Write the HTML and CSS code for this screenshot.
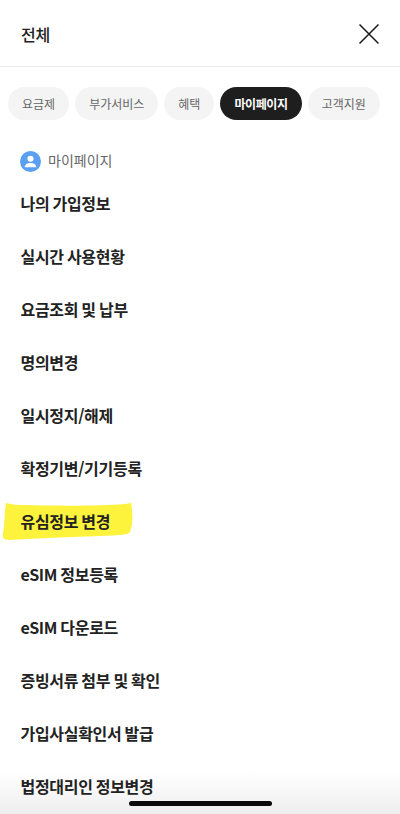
FILE: index.html
```html
<!DOCTYPE html>
<html lang="ko">
<head>
<meta charset="utf-8">
<title>전체</title>
<link rel="stylesheet" href="styles.css">
</head>
<body>
<div class="page">
  <header class="top">
    <h1 class="title">전체</h1>
    <svg class="close" viewBox="0 0 20 20" width="20" height="20"><path d="M.5.5l19 19M19.500.5l-19 19" fill="none" stroke="#1a1a1a" stroke-width="1.500"/></svg>
  </header>
  <nav class="tabs">
    <span class="tab">요금제</span>
    <span class="tab">부가서비스</span>
    <span class="tab">혜택</span>
    <span class="tab active">마이페이지</span>
    <span class="tab">고객지원</span>
  </nav>
  <div class="section">
    <svg class="avatar" viewBox="0 0 20 20" width="21" height="21"><circle cx="10" cy="10" r="10" fill="#5a9ff0"/><circle cx="10" cy="7.400" r="2.900" fill="#fff"/><path d="M4.500 15.500c0-2.600 2.500-4 5.500-4s5.500 1.400 5.500 4z" fill="#fff"/></svg>
    <span class="section-name">마이페이지</span>
  </div>
  <ul class="menu">
    <li>나의 가입정보</li>
    <li>실시간 사용현황</li>
    <li>요금조회 및 납부</li>
    <li>명의변경</li>
    <li>일시정지/해제</li>
    <li>확정기변/기기등록</li>
    <li class="marked"><svg class="marker" viewBox="0 0 132 38" width="132" height="38"><path d="M5 0C9 1 14 2 22 2C60 3 100 3 124 1L130 0C132 10 132 22 129 29C127 32 120 32 100 33C60 34 30 36 8 37C3 37 1 36 2 30C4 22 3 12 5 0z" fill="#fdf23c"/></svg><span class="label">유심정보 변경</span></li>
    <li>eSIM 정보등록</li>
    <li>eSIM 다운로드</li>
    <li>증빙서류 첨부 및 확인</li>
    <li>가입사실확인서 발급</li>
    <li>법정대리인 정보변경</li>
  </ul>
  <div class="fade"></div>
  <div class="home"></div>
</div>
</body>
</html>
```
FILE: styles.css
```css
* { box-sizing: border-box; }
html, body { margin: 0; padding: 0; }
body { background: #fff; font-family: "Noto Sans CJK KR", "Noto Sans", sans-serif; color: #222; }
.page { position: relative; width: 400px; height: 814px; overflow: hidden; }
.top { display: flex; align-items: center; justify-content: space-between; height: 67px; padding: 1px 21px 0 21px; border-bottom: 1px solid #ececec; }
.title { margin: 0; font-size: 16px; font-weight: 500; line-height: 22px; letter-spacing: -.3px; color: #222; }
.close { display: block; }
.tabs { display: flex; gap: 6px; padding: 20px 0 0 8px; }
.tab { display: flex; align-items: center; height: 33px; padding: 0 14px; border-radius: 17px; background: #f4f4f4; color: #666; font-size: 12px; white-space: nowrap; }
.tab.active { background: #1e1e1e; color: #fff; font-weight: 700; letter-spacing: -.4px; }
.section { display: flex; align-items: flex-start; gap: 7px; padding: 31px 0 0 20px; }
.avatar { display: block; }
.section-name { font-size: 14px; line-height: 19px; color: #666; }
.menu { position: relative; z-index: 1; list-style: none; margin: 0; padding: 5px 0 0 20.500px; }
.menu li { position: relative; height: 53px; font-size: 16px; font-weight: 700; line-height: 53px; letter-spacing: -.3px; word-spacing: -1px; color: #222; }
.marked .marker { position: absolute; left: -20px; top: 8px; filter: blur(.7px); }
.marked .label { position: relative; }
.fade { position: absolute; left: 0; right: 0; bottom: 0; height: 42px; background: linear-gradient(to bottom, rgba(238,238,238,0), #eeeeee); }
.home { position: absolute; z-index: 2; left: 129px; bottom: 8px; width: 143px; height: 5px; border-radius: 3px; background: #0a0a0a; }
```
